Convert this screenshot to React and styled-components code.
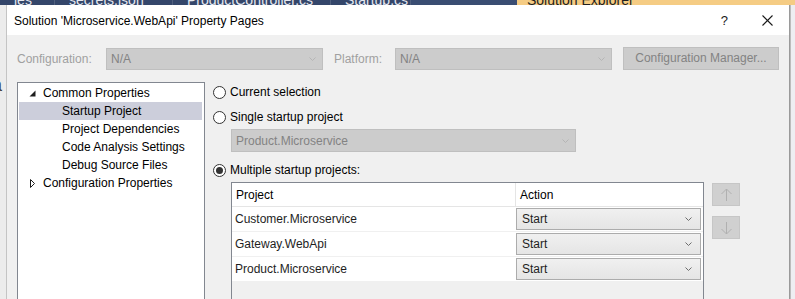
import React from 'react'
import styled, { createGlobalStyle } from 'styled-components'

const GlobalStyle = createGlobalStyle`
  html, body {
    margin: 0;
    padding: 0;
    background: #f0f0f0;
  }
  body {
    font-family: "Liberation Sans", Arial, sans-serif;
    font-size: 12px;
    color: #000;
  }
`

const projects = ['Customer.Microservice', 'Gateway.WebApi', 'Product.Microservice']

const treeItems = [
  { label: 'Common Properties', level: 0, toggle: 'open' },
  { label: 'Startup Project', level: 1, selected: true },
  { label: 'Project Dependencies', level: 1 },
  { label: 'Code Analysis Settings', level: 1 },
  { label: 'Debug Source Files', level: 1 },
  { label: 'Configuration Properties', level: 0, toggle: 'closed' }
]

const Chevron = ({ color = '#a9a9a9' }) => (
  <svg width="7" height="4" viewBox="0 0 7 4">
    <polyline points="0.5,0.5 3.5,3.5 6.5,0.5" fill="none" stroke={color} strokeWidth="1" />
  </svg>
)

const ArrowIcon = ({ down }) => (
  <svg width="11" height="14" viewBox="0 0 11 14">
    <line x1="5.5" y1="1" x2="5.5" y2="13" stroke="#b0b0b0" strokeWidth="1" />
    {down
      ? <polyline points="0.5,8 5.5,13 10.5,8" fill="none" stroke="#b0b0b0" strokeWidth="1" />
      : <polyline points="0.5,6 5.5,1 10.5,6" fill="none" stroke="#b0b0b0" strokeWidth="1" />}
  </svg>
)

const TreeToggle = ({ type }) => (
  <svg width="8" height="9" viewBox="0 0 8 9">
    {type === 'open'
      ? <polygon points="6.5,1.5 6.5,7.5 0.5,7.5" fill="#1e1e1e" />
      : <polygon points="1.5,0.5 5.5,4.5 1.5,8.5" fill="#fff" stroke="#1e1e1e" strokeWidth="1" />}
  </svg>
)

export default function App () {
  return (
    <Screen>
      <GlobalStyle />
      <TopStrip>
        <NavyTabs>
          <Tab w={55}>ies</Tab>
          <Tab w={118}>secrets.json</Tab>
          <Tab w={158}>ProductController.cs</Tab>
          <Tab w={80}>Startup.cs</Tab>
          <NavyFill />
        </NavyTabs>
        <GoldTab>Solution Explorer</GoldTab>
      </TopStrip>
      <Workspace>
        <LeftGutter>
          <GutterGlyph>a</GutterGlyph>
        </LeftGutter>
        <Dialog>
          <TitleBar>
            <Title>Solution 'Microservice.WebApi' Property Pages</Title>
            <TitleButtons>
              <HelpMark>?</HelpMark>
              <svg width="11" height="11" viewBox="0 0 11 11">
                <line x1="0.5" y1="0.5" x2="10.5" y2="10.5" stroke="#1a1a1a" strokeWidth="1.1" />
                <line x1="10.5" y1="0.5" x2="0.5" y2="10.5" stroke="#1a1a1a" strokeWidth="1.1" />
              </svg>
            </TitleButtons>
          </TitleBar>
          <Body>
            <ConfigRow>
              <DimLabel w={89}>Configuration:</DimLabel>
              <DisabledCombo w={217}>
                <span>N/A</span>
                <Chevron color="#b5b5b5" />
              </DisabledCombo>
              <DimLabel w={61} gap={11}>Platform:</DimLabel>
              <DisabledCombo w={217}>
                <span>N/A</span>
                <Chevron color="#b5b5b5" />
              </DisabledCombo>
              <ManagerButton>Configuration Manager...</ManagerButton>
            </ConfigRow>
            <Main>
              <Tree>
                {treeItems.map((item) => (
                  <TreeRow key={item.label} selected={item.selected} level={item.level}>
                    <ToggleSlot>{item.toggle && <TreeToggle type={item.toggle} />}</ToggleSlot>
                    {item.label}
                  </TreeRow>
                ))}
              </Tree>
              <Pane>
                <RadioRow>
                  <Radio />
                  Current selection
                </RadioRow>
                <RadioRow top={7}>
                  <Radio />
                  Single startup project
                </RadioRow>
                <ProjectCombo>
                  <span>Product.Microservice</span>
                  <Chevron color="#b5b5b5" />
                </ProjectCombo>
                <RadioRow top={9}>
                  <Radio checked />
                  Multiple startup projects:
                </RadioRow>
                <GridArea>
                  <Grid>
                    <HeaderCell>Project</HeaderCell>
                    <HeaderCell divider>Action</HeaderCell>
                    {projects.map((name) => (
                      <React.Fragment key={name}>
                        <NameCell>{name}</NameCell>
                        <ActionCell>
                          <ActionCombo>
                            <span>Start</span>
                            <Chevron color="#6d6d6d" />
                          </ActionCombo>
                        </ActionCell>
                      </React.Fragment>
                    ))}
                  </Grid>
                  <MoveButtons>
                    <MoveButton><ArrowIcon /></MoveButton>
                    <MoveButton><ArrowIcon down /></MoveButton>
                  </MoveButtons>
                </GridArea>
              </Pane>
            </Main>
          </Body>
        </Dialog>
        <RightGutter />
      </Workspace>
    </Screen>
  )
}

const Screen = styled.div`
  width: 795px;
  height: 299px;
  overflow: hidden;
  display: grid;
  grid-template-rows: 5px 1fr;
  background: #f0f0f0;
`

const TopStrip = styled.div`
  display: flex;
  overflow: hidden;
`

const NavyTabs = styled.div`
  display: flex;
  width: 517px;
  background: #2b3b5b;
`

const Tab = styled.div`
  width: ${(p) => p.w}px;
  flex: none;
  height: 5px;
  line-height: 0;
  color: #e6e9f0;
  font-size: 14px;
  padding-left: 14px;
  box-sizing: border-box;
  border-right: 1px solid #51607e;
  background: #34466a;
  overflow: hidden;
  white-space: nowrap;
`

const NavyFill = styled.div`
  flex: 1;
  background: #3a4d72;
`

const GoldTab = styled.div`
  flex: 1;
  background: #f5cc84;
  color: #1e1e1e;
  font-size: 14px;
  line-height: 0;
  padding-left: 10px;
  overflow: hidden;
  white-space: nowrap;
`

const Workspace = styled.div`
  display: flex;
  min-height: 0;
`

const LeftGutter = styled.div`
  width: 6px;
  flex: none;
  background: #ececec;
  border-right: 1px solid #c4c4c4;
  overflow: hidden;
  position: relative;
`

const GutterGlyph = styled.span`
  position: absolute;
  top: 70px;
  left: -8px;
  font-size: 18px;
  color: #3b3b3b;
`

const RightGutter = styled.div`
  flex: 1;
  background: #eeeef2;
  border-left: 1px solid #bcbcbc;
`

const Dialog = styled.div`
  width: 782px;
  flex: none;
  display: flex;
  flex-direction: column;
  background: #f0f0f0;
  border-right: 1px solid #9a9a9a;
`

const TitleBar = styled.div`
  height: 30px;
  flex: none;
  display: flex;
  align-items: center;
  justify-content: space-between;
  padding: 0 16px 0 7px;
  background: #ffffff;
`

const Title = styled.span`
  font-size: 12px;
  color: #000;
  padding-top: 1px;
`

const TitleButtons = styled.div`
  display: flex;
  align-items: center;
  gap: 34px;
`

const HelpMark = styled.span`
  font-size: 13px;
  color: #1a1a1a;
`

const Body = styled.div`
  flex: 1;
  padding: 11px 10px 0 10px;
  display: flex;
  flex-direction: column;
  min-height: 0;
`

const ConfigRow = styled.div`
  display: flex;
  align-items: center;
  height: 23px;
  padding-top: 1px;
`

const DimLabel = styled.span`
  width: ${(p) => p.w}px;
  margin-left: ${(p) => p.gap || 0}px;
  flex: none;
  color: #a0a0a0;
`

const DisabledCombo = styled.div`
  width: ${(p) => p.w}px;
  height: 22px;
  box-sizing: border-box;
  flex: none;
  display: flex;
  align-items: center;
  justify-content: space-between;
  padding: 0 6px 0 4px;
  background: #cccccc;
  border: 1px solid #bfbfbf;
  color: #838383;
`

const ManagerButton = styled.div`
  margin-left: 11px;
  margin-top: -1px;
  width: 157px;
  height: 23px;
  box-sizing: border-box;
  display: flex;
  align-items: center;
  justify-content: center;
  background: #cccccc;
  border: 1px solid #bfbfbf;
  color: #838383;
`

const Main = styled.div`
  flex: 1;
  display: flex;
  gap: 8px;
  margin-top: 12px;
  min-height: 0;
`

const Tree = styled.div`
  width: 188px;
  flex: none;
  box-sizing: border-box;
  background: #ffffff;
  border: 1px solid #828790;
  border-bottom: none;
  padding: 1px 2px 0 1px;
`

const TreeRow = styled.div`
  height: 18px;
  display: flex;
  align-items: center;
  padding-left: ${(p) => (p.level ? 28 : 9)}px;
  background: ${(p) => (p.selected ? '#cccedb' : 'transparent')};
  white-space: nowrap;
`

const ToggleSlot = styled.span`
  width: 15px;
  flex: none;
  display: flex;
  align-items: center;
  padding-left: 1px;
  box-sizing: border-box;
`

const Pane = styled.div`
  flex: 1;
  display: flex;
  flex-direction: column;
  padding-top: 1px;
  min-width: 0;
`

const RadioRow = styled.div`
  height: 18px;
  display: flex;
  align-items: center;
  gap: 4px;
  margin-top: ${(p) => p.top || 0}px;
`

const Radio = styled.span`
  width: 13px;
  height: 13px;
  box-sizing: border-box;
  border-radius: 50%;
  border: 1px solid #333333;
  background: #ffffff;
  flex: none;
  display: flex;
  align-items: center;
  justify-content: center;

  &::after {
    content: '';
    width: 7px;
    height: 7px;
    border-radius: 50%;
    background: ${(p) => (p.checked ? '#333333' : 'transparent')};
  }
`

const ProjectCombo = styled(DisabledCombo)`
  width: 345px;
  height: 23px;
  margin: 3px 0 0 18px;
`

const GridArea = styled.div`
  display: flex;
  align-items: flex-start;
  gap: 8px;
  margin: 3px 0 0 18px;
  flex: 1;
  min-height: 0;
`

const Grid = styled.div`
  width: 473px;
  flex: none;
  align-self: stretch;
  box-sizing: border-box;
  border: 1px solid #828790;
  border-bottom: none;
  background: #f0f0f0;
  display: grid;
  grid-template-columns: 283px 1fr;
  grid-auto-rows: 25px;
  grid-template-rows: 24px;
  align-content: start;
`

const HeaderCell = styled.div`
  background: #ffffff;
  border-bottom: 1px solid #e5e5e5;
  border-left: ${(p) => (p.divider ? '1px solid #e5e5e5' : 'none')};
  display: flex;
  align-items: center;
  padding-left: 4px;
  padding-top: 1px;
`

const NameCell = styled.div`
  background: #ffffff;
  border-bottom: 1px solid #f0f0f0;
  display: flex;
  align-items: center;
  padding-left: 3px;
  color: #1e1e1e;
`

const ActionCell = styled.div`
  border-bottom: 1px solid #f0f0f0;
  background: #ffffff;
  padding: 1px 2px 1px 1px;
  box-sizing: border-box;
`

const ActionCombo = styled.div`
  height: 22px;
  box-sizing: border-box;
  display: flex;
  align-items: center;
  justify-content: space-between;
  padding: 0 8px 0 5px;
  border: 1px solid #acacac;
  background: linear-gradient(#f0f0f0, #e5e5e5);
  color: #1e1e1e;
`

const MoveButtons = styled.div`
  display: flex;
  flex-direction: column;
  gap: 10px;
  margin-top: 1px;
`

const MoveButton = styled.div`
  width: 28px;
  height: 23px;
  box-sizing: border-box;
  display: flex;
  align-items: center;
  justify-content: center;
  background: #d0d0d0;
  border: 1px solid #c6c6c6;
`
